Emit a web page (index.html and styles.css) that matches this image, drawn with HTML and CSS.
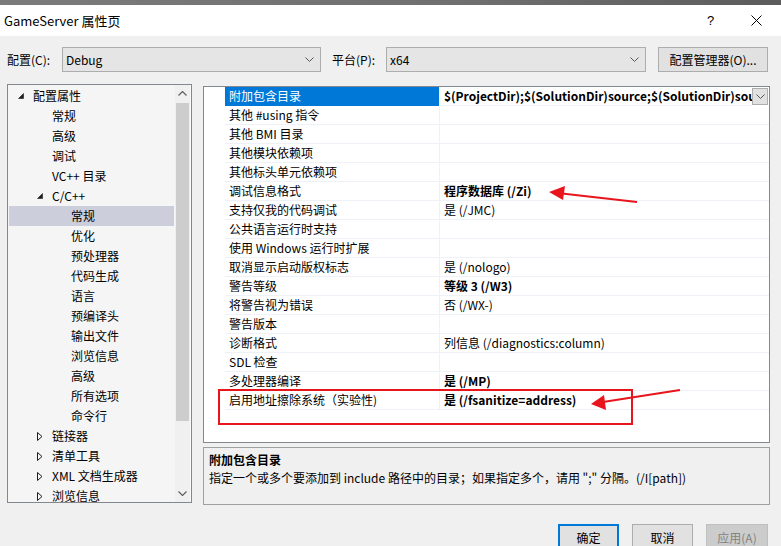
FILE: index.html
```html
<!DOCTYPE html>
<html lang="zh">
<head>
<meta charset="utf-8">
<title>GameServer 属性页</title>
<link rel="stylesheet" href="styles.css">
</head>
<body>
<div class="topstrip"></div>
<div class="titlebar">
  <span class="title">GameServer 属性页</span>
  <span class="tb-btns">
    <span class="help">?</span>
    <svg class="close" width="11" height="11" viewBox="0 0 11 11"><path d="M0.5 0.5L10.5 10.5M10.5 0.5L0.5 10.5" stroke="#000" stroke-width="1" fill="none"/></svg>
  </span>
</div>

<div class="config-row">
  <span class="lbl lbl-cfg">配置(C):</span>
  <div class="combo combo-cfg"><span>Debug</span><svg class="chev" width="9" height="5" viewBox="0 0 9 5"><path d="M0.5 0.5L4.5 4.5L8.5 0.5" stroke="#555" fill="none"/></svg></div>
  <span class="lbl lbl-plat">平台(P):</span>
  <div class="combo combo-plat"><span>x64</span><svg class="chev" width="9" height="5" viewBox="0 0 9 5"><path d="M0.5 0.5L4.5 4.5L8.5 0.5" stroke="#555" fill="none"/></svg></div>
  <div class="btn btn-mgr">配置管理器(O)...</div>
</div>

<div class="main">
  <div class="tree">
    <div class="tree-list">
      <div class="trow l0"><span class="tg"><svg width="6" height="6" viewBox="0 0 6 6"><path d="M5.5 0.5V5.5H0.5Z" fill="#1e1e1e" stroke="#1e1e1e" stroke-width="0.6"/></svg></span>配置属性</div>
      <div class="trow l1"><span class="tg"></span>常规</div>
      <div class="trow l1"><span class="tg"></span>高级</div>
      <div class="trow l1"><span class="tg"></span>调试</div>
      <div class="trow l1"><span class="tg"></span>VC++ 目录</div>
      <div class="trow l1"><span class="tg"><svg width="6" height="6" viewBox="0 0 6 6"><path d="M5.5 0.5V5.5H0.5Z" fill="#1e1e1e" stroke="#1e1e1e" stroke-width="0.6"/></svg></span>C/C++</div>
      <div class="trow l2 sel"><span class="tg"></span>常规</div>
      <div class="trow l2"><span class="tg"></span>优化</div>
      <div class="trow l2"><span class="tg"></span>预处理器</div>
      <div class="trow l2"><span class="tg"></span>代码生成</div>
      <div class="trow l2"><span class="tg"></span>语言</div>
      <div class="trow l2"><span class="tg"></span>预编译头</div>
      <div class="trow l2"><span class="tg"></span>输出文件</div>
      <div class="trow l2"><span class="tg"></span>浏览信息</div>
      <div class="trow l2"><span class="tg"></span>高级</div>
      <div class="trow l2"><span class="tg"></span>所有选项</div>
      <div class="trow l2"><span class="tg"></span>命令行</div>
      <div class="trow l1"><span class="tg"><svg width="6" height="9" viewBox="0 0 6 9"><path d="M0.5 0.5L5 4.5L0.5 8.5Z" fill="none" stroke="#1e1e1e" stroke-width="1"/></svg></span>链接器</div>
      <div class="trow l1"><span class="tg"><svg width="6" height="9" viewBox="0 0 6 9"><path d="M0.5 0.5L5 4.5L0.5 8.5Z" fill="none" stroke="#1e1e1e" stroke-width="1"/></svg></span>清单工具</div>
      <div class="trow l1"><span class="tg"><svg width="6" height="9" viewBox="0 0 6 9"><path d="M0.5 0.5L5 4.5L0.5 8.5Z" fill="none" stroke="#1e1e1e" stroke-width="1"/></svg></span>XML 文档生成器</div>
      <div class="trow l1"><span class="tg"><svg width="6" height="9" viewBox="0 0 6 9"><path d="M0.5 0.5L5 4.5L0.5 8.5Z" fill="none" stroke="#1e1e1e" stroke-width="1"/></svg></span>浏览信息</div>
    </div>
    <div class="vscroll">
      <div class="sb-arrow"><svg width="9" height="5" viewBox="0 0 9 5"><path d="M0.5 4.5L4.5 0.5L8.5 4.5" stroke="#606060" fill="none" stroke-width="1.2"/></svg></div>
      <div class="sb-thumb"></div>
      <div class="sb-track"></div>
      <div class="sb-arrow"><svg width="9" height="5" viewBox="0 0 9 5"><path d="M0.5 0.5L4.5 4.5L8.5 0.5" stroke="#606060" fill="none" stroke-width="1.2"/></svg></div>
    </div>
  </div>

  <div class="rightcol">
    <div class="grid">
      <div class="grow first"><span class="gut"></span><span class="gname">附加包含目录</span><span class="gval b">$(ProjectDir);$(SolutionDir)source;$(SolutionDir)source</span><span class="ddbtn"><svg width="9" height="5" viewBox="0 0 9 5"><path d="M0.5 0.5L4.5 4.5L8.5 0.5" stroke="#555" fill="none"/></svg></span></div>
      <div class="grow"><span class="gut"></span><span class="gname">其他 #using 指令</span><span class="gval"></span></div>
      <div class="grow"><span class="gut"></span><span class="gname">其他 BMI 目录</span><span class="gval"></span></div>
      <div class="grow"><span class="gut"></span><span class="gname">其他模块依赖项</span><span class="gval"></span></div>
      <div class="grow"><span class="gut"></span><span class="gname">其他标头单元依赖项</span><span class="gval"></span></div>
      <div class="grow"><span class="gut"></span><span class="gname">调试信息格式</span><span class="gval b">程序数据库 (/Zi)</span></div>
      <div class="grow"><span class="gut"></span><span class="gname">支持仅我的代码调试</span><span class="gval">是 (/JMC)</span></div>
      <div class="grow"><span class="gut"></span><span class="gname">公共语言运行时支持</span><span class="gval"></span></div>
      <div class="grow"><span class="gut"></span><span class="gname">使用 Windows 运行时扩展</span><span class="gval"></span></div>
      <div class="grow"><span class="gut"></span><span class="gname">取消显示启动版权标志</span><span class="gval">是 (/nologo)</span></div>
      <div class="grow"><span class="gut"></span><span class="gname">警告等级</span><span class="gval b">等级 3 (/W3)</span></div>
      <div class="grow"><span class="gut"></span><span class="gname">将警告视为错误</span><span class="gval">否 (/WX-)</span></div>
      <div class="grow"><span class="gut"></span><span class="gname">警告版本</span><span class="gval"></span></div>
      <div class="grow"><span class="gut"></span><span class="gname">诊断格式</span><span class="gval">列信息 (/diagnostics:column)</span></div>
      <div class="grow"><span class="gut"></span><span class="gname">SDL 检查</span><span class="gval"></span></div>
      <div class="grow"><span class="gut"></span><span class="gname">多处理器编译</span><span class="gval b">是 (/MP)</span></div>
      <div class="grow"><span class="gut"></span><span class="gname">启用地址擦除系统（实验性)</span><span class="gval b">是 (/fsanitize=address)</span></div>
    </div>
    <div class="desc">
      <div class="desc-title">附加包含目录</div>
      <div class="desc-text">指定一个或多个要添加到 include 路径中的目录；如果指定多个，请用 ";" 分隔。(/I[path])</div>
    </div>
  </div>
</div>

<div class="buttons">
  <div class="btn btn-ok">确定</div>
  <div class="btn btn-cancel">取消</div>
  <div class="btn btn-apply">应用(A)</div>
</div>

<div class="redbox"></div>
<svg class="arrows" width="781" height="546" viewBox="0 0 781 546">
  <line x1="637" y1="202" x2="562" y2="193.5" stroke="#e8151d" stroke-width="2.2"/>
  <polygon points="549,192 565,186 563,200" fill="#e8151d"/>
  <line x1="680" y1="390" x2="603" y2="402" stroke="#e8151d" stroke-width="2.2"/>
  <polygon points="591,404 604,395 606,410" fill="#e8151d"/>
</svg>
</body>
</html>
```
FILE: styles.css
```css
* { box-sizing: border-box; }
html, body { margin: 0; padding: 0; }
body {
  width: 781px;
  height: 546px;
  overflow: hidden;
  background: #f0f0f0;
  font-family: "Noto Sans CJK SC", "Noto Sans", sans-serif;
  font-size: 12px;
  color: #000;
  position: relative;
}
.topstrip {
  height: 5px;
  background: linear-gradient(90deg, #7b7b7b 0%, #6f6f6f 60%, #5c5c5c 100%);
}
.titlebar {
  height: 31px;
  background: #fff;
  display: flex;
  align-items: center;
  justify-content: space-between;
  padding-left: 4px;
}
.title { font-size: 13px; line-height: 16px; margin-top: 1px; }
.tb-btns { display: flex; align-items: center; }
.help { font-size: 13px; width: 10px; margin-right: 34px; font-family: "Liberation Sans", sans-serif; }
.close { margin-right: 19px; }

.config-row {
  margin-top: 11px;
  height: 25px;
  display: flex;
  align-items: center;
  padding-left: 7px;
}
.lbl { line-height: 25px; }
.lbl-cfg { width: 55px; }
.lbl-plat { width: 54px; margin-left: 11px; }
.combo {
  height: 25px;
  background: #e5e5e5;
  border: 1px solid #adadad;
  display: flex;
  align-items: center;
  justify-content: space-between;
  padding: 0 6px 0 3px;
}
.combo-cfg { width: 259px; }
.combo-plat { width: 260px; }
.btn {
  height: 25px;
  background: #e1e1e1;
  border: 1px solid #adadad;
  display: flex;
  align-items: center;
  justify-content: center;
}
.btn-mgr { width: 110px; margin-left: 12px; }

.main {
  margin-top: 12px;
  display: flex;
  padding-left: 7px;
  height: 421px;
}
.tree {
  width: 185px;
  height: 419px;
  border: 1px solid #828790;
  background: #f5f5f5;
  display: flex;
}
.tree-list {
  width: 167px;
  padding: 1px 1px 0 1px;
  overflow: hidden;
}
.trow {
  height: 20px;
  line-height: 20px;
  display: flex;
  align-items: center;
  white-space: nowrap;
}
.trow.l0 { padding-left: 9px; }
.trow.l1 { padding-left: 28px; }
.trow.l2 { padding-left: 47px; }
.trow.sel { background: #cccedb; }
.tg { width: 15px; display: flex; align-items: center; height: 20px; }
.vscroll {
  width: 16px;
  background: #f0f0f0;
  display: flex;
  flex-direction: column;
  border-right: 1px solid #fafafa;
}
.sb-arrow {
  height: 17px;
  display: flex;
  align-items: center;
  justify-content: center;
}
.sb-thumb {
  height: 318px;
  margin: 1px 1px 0 1px;
  background: #cdcdcd;
}
.sb-track { flex: 1; }

.rightcol {
  margin-left: 11px;
  margin-top: 2px;
  width: 567px;
  display: flex;
  flex-direction: column;
}
.grid {
  height: 357px;
  border: 1px solid #828790;
  background: #fff;
  padding-top: 0;
}
.grow {
  height: 19px;
  display: flex;
  align-items: stretch;
  position: relative;
}
.gut { width: 21px; flex: none; }
.gname {
  width: 214px;
  flex: none;
  padding-left: 4px;
  line-height: 18px;
  border-bottom: 1px solid #eef1f5;
  white-space: nowrap;
}
.gval {
  flex: 1;
  min-width: 0;
  padding-left: 4px;
  line-height: 18px;
  border-bottom: 1px solid #eef1f5;
  border-left: 1px solid #eef1f5;
  white-space: nowrap;
  overflow: hidden;
}
.gval.b { font-weight: bold; }
.grow.first .gname { background: #0078d7; color: #fff; border-bottom-color: #0078d7; }
.grow.first .gval { padding-right: 2px; }
.ddbtn {
  width: 16px;
  height: 17px;
  margin: 1px 1px 0 0;
  background: #e1e1e1;
  border: 1px solid #adadad;
  display: flex;
  align-items: center;
  justify-content: center;
  flex: none;
}

.desc {
  margin-top: 4px;
  height: 58px;
  border: 1px solid #a0a0a0;
  padding: 3px 5px;
}
.desc-title { font-weight: bold; line-height: 18px; }
.desc-text { line-height: 18px; white-space: nowrap; }

.buttons {
  margin-top: 19px;
  display: flex;
  justify-content: flex-end;
  padding-right: 13px;
}
.buttons .btn { height: 27px; margin-left: 13px; }
.btn-ok { width: 61px; border: 2px solid #0078d7; }
.btn-cancel { width: 61px; }
.btn-apply { width: 62px; background: #cccccc; border-color: #bfbfbf; color: #838383; }

.redbox {
  position: absolute;
  left: 218px;
  top: 389px;
  width: 415px;
  height: 36px;
  border: 2px solid #e8151d;
}
.arrows {
  position: absolute;
  left: 0;
  top: 0;
  pointer-events: none;
}
```
